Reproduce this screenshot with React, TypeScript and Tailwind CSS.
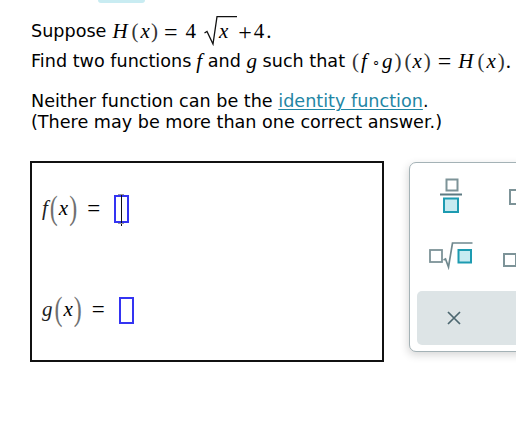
import React from "react";

const serif = { fontFamily: '"Liberation Serif", "Times New Roman", serif' } as React.CSSProperties;

function Sq({ size = 13 }: { size?: number }) {
  return <span className="block border-2 border-[#7d9398] bg-white" style={{ width: size, height: size }} />;
}

function BigParen({ c }: { c: string }) {
  return (
    <span className="inline-block text-[24px] leading-none text-[#707070] scale-y-[1.4]" style={serif}>
      {c}
    </span>
  );
}

export default function App() {
  return (
    <div className="relative w-[516px] h-[424px] overflow-hidden bg-white text-black" style={{ fontFamily: '"DejaVu Sans", Verdana, sans-serif' }}>
      <div className="ml-[98px] w-[47px] h-[3px] rounded-b-[4px] bg-[#c9ecf2]" />
      <div className="pl-[31px] pt-[14px] text-[17.6px] leading-[21px]">
        <div className="h-[29px] flex items-center">
          <span>Suppose</span>
          <span style={serif} className="ml-[6px] text-[21px] leading-none flex items-center">
            <i>H</i>
            <span className="ml-[4px] text-[#333]">(</span>
            <i className="ml-[2px]">x</i>
            <span className="ml-[1px] text-[#333]">)</span>
            <span className="ml-[6px] text-[24px]">=</span>
            <span className="ml-[8px]">4</span>
            <span className="relative ml-[8px] pl-[15px] pr-[8px]">
              <svg width="33" height="29" viewBox="0 0 33 29" className="absolute left-0 -top-[5px] block overflow-visible">
                <path d="M0.5 17 L3 15.5 L9 28 L13 0.7 L33 0.7" fill="none" stroke="#111" strokeWidth="1.3" />
              </svg>
              <i>x</i>
            </span>
            <span className="ml-[2px] text-[24px]">+</span>
            <span className="ml-[2px]">4</span>
            <span className="ml-[2px]">.</span>
          </span>
        </div>
        <div className="h-[30px] flex items-center">
          <span>Find two functions</span>
          <i style={serif} className="ml-[5px] text-[21px]">f</i>
          <span>&nbsp;and&nbsp;</span>
          <i style={serif} className="text-[21px]">g</i>
          <span>&nbsp;such that</span>
          <span style={serif} className="ml-[7px] text-[21px] leading-none flex items-center">
            <span className="text-[#333]">(</span>
            <i className="ml-[2px]">f</i>
            <span className="ml-[5px] text-[13px]">∘</span>
            <i className="ml-[2px]">g</i>
            <span className="ml-[2px] text-[#333]">)</span>
            <span className="ml-[3px] text-[#333]">(</span>
            <i className="ml-[1px]">x</i>
            <span className="ml-[2px] text-[#333]">)</span>
            <span className="ml-[7px] text-[24px]">=</span>
            <i className="ml-[7px]">H</i>
            <span className="ml-[4px] text-[#333]">(</span>
            <i className="ml-[2px]">x</i>
            <span className="ml-[2px] text-[#333]">)</span>
            <span className="ml-[1px]">.</span>
          </span>
        </div>
        <div className="mt-[15px]">
          Neither function can be the{" "}
          <span className="text-[#1f86a4] underline underline-offset-[2px] decoration-[1px]">identity function</span>.
        </div>
        <div>(There may be more than one correct answer.)</div>
      </div>

      <div className="mt-[28px] flex items-start">
        <div className="ml-[30px] w-[354px] h-[201px] shrink-0 border-2 border-[#111] flex flex-col">
          <div className="mt-[31px] ml-[10px] flex items-center h-[30px]" style={serif}>
            <i className="text-[21px] text-[#222]">f</i>
            <span className="ml-[2px]"><BigParen c="(" /></span>
            <i className="text-[21px] ml-[1px]">x</i>
            <span className="ml-[1px]"><BigParen c=")" /></span>
            <span className="ml-[10px] text-[23px]">=</span>
            <span className="relative ml-[14px] w-[15px] h-[28px] border-2 border-[#3434f2]">
              <span className="absolute left-[4.5px] -top-[3px] w-[1px] h-[32px] bg-[#111]" />
              <span className="absolute left-[2px] -top-[3px] w-[6px] h-[1px] bg-[#999]" />
              <span className="absolute left-[2px] -bottom-[3px] w-[6px] h-[1px] bg-[#999]" />
            </span>
          </div>
          <div className="mt-[71px] ml-[10px] flex items-center h-[30px]" style={serif}>
            <i className="text-[21px] text-[#222]">g</i>
            <span className="ml-[2px]"><BigParen c="(" /></span>
            <i className="text-[21px] ml-[1px]">x</i>
            <span className="ml-[1px]"><BigParen c=")" /></span>
            <span className="ml-[10px] text-[23px]">=</span>
            <span className="ml-[14px] w-[15px] h-[27px] border-2 border-[#3434f2]" />
          </div>
        </div>

        <div className="ml-[25px] mt-[1px] w-[140px] h-[190px] shrink-0 rounded-[7px] border border-[#a4b2b6] bg-white shadow-[-1px_3px_8px_rgba(0,0,0,0.16)] flex flex-col">
          <div className="h-[62px] flex items-start">
            <svg width="24" height="37" viewBox="0 0 24 37" className="block ml-[29px] mt-[14px]">
              <rect x="7.5" y="2.5" width="11" height="11" fill="#fff" stroke="#7d9398" strokeWidth="2" />
              <rect x="1" y="16.5" width="22" height="2" fill="#5c7a82" />
              <rect x="5" y="21.5" width="14" height="13.5" fill="#c8ebf1" stroke="#1d9bb1" strokeWidth="2" />
            </svg>
            <div className="ml-[46px] mt-[26px]">
              <Sq size={16} />
            </div>
          </div>
          <div className="h-[66px] flex items-start">
            <svg width="46" height="29" viewBox="0 0 46 29" className="block ml-[18px] mt-[16px]">
              <rect x="2" y="9" width="12" height="12" fill="#fff" stroke="#7d9398" strokeWidth="1.8" />
              <path d="M15.5 19 L17.5 18 L20.5 26 L24.5 2 L44.5 2" fill="none" stroke="#6f888e" strokeWidth="1.7" />
              <rect x="30.5" y="9" width="12.5" height="12.5" fill="#c8ebf1" stroke="#1d9bb1" strokeWidth="2" />
            </svg>
            <div className="ml-[29px] mt-[28px]">
              <Sq size={14} />
            </div>
          </div>
          <div className="ml-[7px] h-[54px] rounded-l-[5px] bg-[#dde4e6] flex items-center">
            <svg width="14" height="14" viewBox="0 0 14 14" className="block ml-[30px]">
              <path d="M1 1 L13 13 M13 1 L1 13" stroke="#4c6770" strokeWidth="1.7" fill="none" />
            </svg>
          </div>
        </div>
      </div>
    </div>
  );
}
